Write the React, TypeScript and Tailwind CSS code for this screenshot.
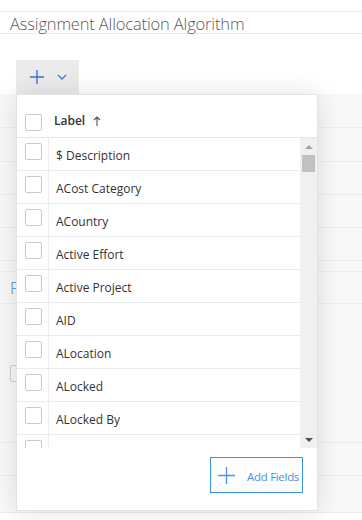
import React from "react"

const fields = [
  "$ Description",
  "ACost Category",
  "ACountry",
  "Active Effort",
  "Active Project",
  "AID",
  "ALocation",
  "ALocked",
  "ALocked By",
  "",
]

// rows behind the dropdown (heights in px, each with a bottom rule)
const bgRows = [34, 34, 33, 33, 33, 11, 32, 139, 33, 37]

function Box() {
  return <div className="h-[17px] w-[17px] shrink-0 rounded-[2px] border border-[#c9c9c9] bg-white" />
}

export default function App() {
  return (
    <div
      className="relative h-[520px] w-[362px] overflow-hidden bg-white text-[#333]"
      style={{ fontFamily: '"Open Sans", "Noto Sans", sans-serif' }}
    >
      {/* ── page behind the menu ── */}
      <div className="flex flex-col">
        <div className="h-[12px] border-b border-[#ececec]" />
        <div className="flex h-[22px] items-end border-b border-[#ececec] px-[10px] pb-[1px]">
          <span className="whitespace-nowrap text-[16.5px] font-light leading-none tracking-[-0.15px] text-[#5a5a5a]">
            Assignment Allocation Algorithm
          </span>
        </div>
        <div className="h-[26px]" />
        <div className="flex h-[34px] items-center">
          <button className="ml-[16px] flex h-[34px] w-[63px] items-center gap-[12px] bg-[#ebebeb] pl-[13px]">
            <svg width="16" height="16" viewBox="0 0 16 16" fill="none" stroke="#3f6fd6" strokeWidth="1.4">
              <path d="M8 1v14M1 8h14" />
            </svg>
            <svg width="10" height="6" viewBox="0 0 10 6" fill="none" stroke="#3f7fd6" strokeWidth="1.4">
              <path d="M1 1l4 4 4-4" />
            </svg>
          </button>
        </div>
        {bgRows.map((h, i) => (
          <div
            key={i}
            className="flex items-center border-b border-[#ececec] bg-[#f8f8f8] px-[10px]"
            style={{ height: h }}
          >
            {i === 6 && <span className="text-[16px] font-light text-[#3a8ee0]">F</span>}
            {i === 7 && <div className="h-[17px] w-[17px] rounded-[2px] border border-[#cfcfcf]" />}
          </div>
        ))}
      </div>

      {/* ── field picker dropdown ── */}
      <div className="absolute left-[16px] top-[94px] flex h-[417px] w-[302px] flex-col border border-[#e3e3e3] bg-white shadow-[0_0_24px_rgba(0,0,0,0.12)]">
        <div className="flex h-[43px] shrink-0 items-end gap-[12px] border-b border-[#e6e6e6] pb-[6px] pl-[8px]">
          <Box />
          <div className="flex items-center gap-[8px] pb-[1px]">
            <span className="text-[12px] font-semibold text-[#333]">Label</span>
            <svg width="8" height="10" viewBox="0 0 8 10" fill="none" stroke="#5a5040" strokeWidth="1.1">
              <path d="M4 10V1M1 4l3-3 3 3" />
            </svg>
          </div>
        </div>

        <div className="flex h-[310px] shrink-0 overflow-hidden">
          <div className="flex flex-1 flex-col">
            {fields.map((f, i) => (
              <div key={i} className="flex h-[33px] shrink-0 border-b border-[#ececec]">
                <div className="flex w-[32px] shrink-0 border-r border-[#ececec] pl-[8px] pt-[5px]">
                  <Box />
                </div>
                <div className="flex items-center whitespace-nowrap pl-[7px] pt-[3px] text-[12px] text-[#333]">{f}</div>
              </div>
            ))}
          </div>
          <div className="flex w-[17px] shrink-0 flex-col items-center bg-[#f0f0f0]">
            <div className="flex h-[17px] items-center justify-center">
              <div className="h-0 w-0 border-x-[4px] border-b-[4px] border-x-transparent border-b-[#a3a3a3]" />
            </div>
            <div className="h-[17px] w-[13px] bg-[#c1c1c1]" />
            <div className="flex-1" />
            <div className="flex h-[17px] items-center justify-center">
              <div className="h-0 w-0 border-x-[4px] border-t-[4px] border-x-transparent border-t-[#505050]" />
            </div>
          </div>
        </div>

        <div className="flex flex-1 items-start justify-end pr-[14px] pt-[9px]">
          <button className="flex h-[36px] w-[93px] items-center gap-[11px] border border-[#3893e4] pl-[6px]">
            <svg width="19" height="19" viewBox="0 0 19 19" fill="none" stroke="#4a93e6" strokeWidth="1.3">
              <path d="M9.5 1v17M1 9.5h17" />
            </svg>
            <span className="whitespace-nowrap pt-[3px] text-[11.5px] tracking-[-0.3px] text-[#4c8fe0]">Add Fields</span>
          </button>
        </div>
      </div>
    </div>
  )
}
